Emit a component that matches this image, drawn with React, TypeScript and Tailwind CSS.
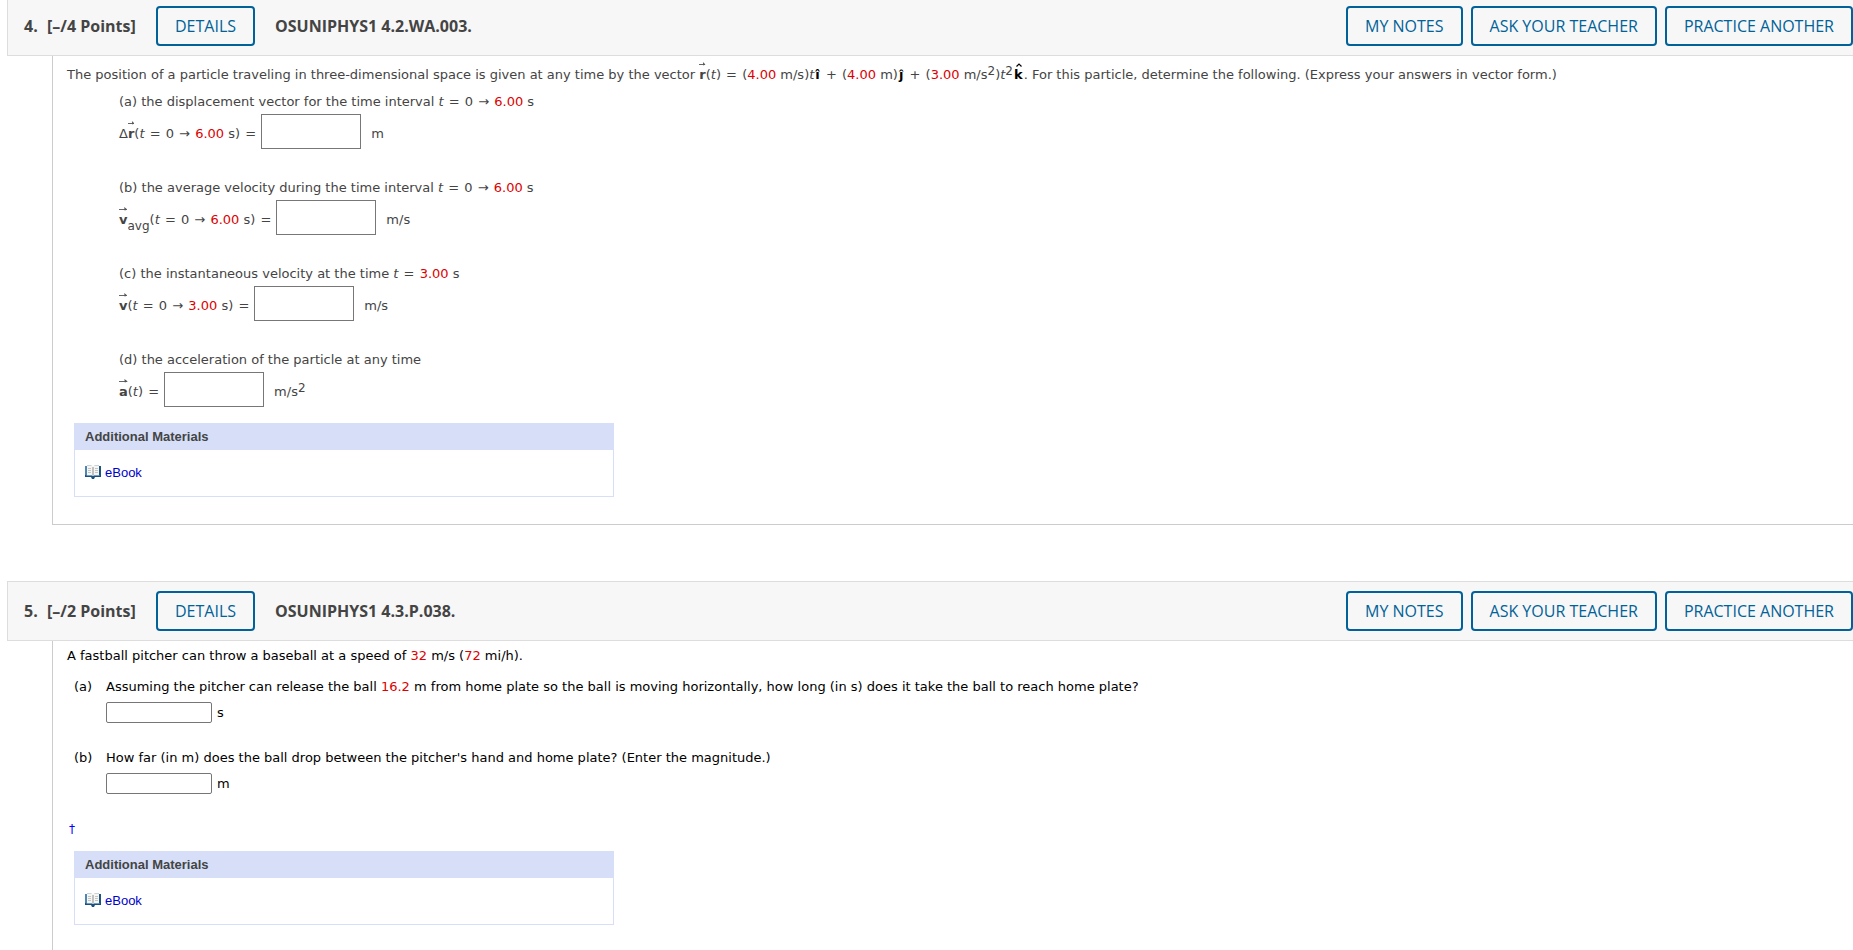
import React from "react";

const questionButtons = ["MY NOTES", "ASK YOUR TEACHER", "PRACTICE ANOTHER"];

const buttonClass =
  "h-10 shrink-0 whitespace-nowrap rounded border-2 border-[#006298] px-[17px] font-['Open_Sans',sans-serif] text-base font-medium leading-none text-[#006298]";

function Num({ children }: { children: React.ReactNode }) {
  return <span className="text-[#dd0000]">{children}</span>;
}

function Op({ children }: { children: React.ReactNode }) {
  return <span className="mx-px">{children}</span>;
}

function Vec({ children }: { children: React.ReactNode }) {
  return (
    <b className="relative inline-block">
      {children}
      <svg
        className="absolute -top-1 left-0 h-1.5 w-full"
        viewBox="0 0 9 6"
        preserveAspectRatio="none"
        aria-hidden="true"
      >
        <path d="M0 3H8V4H0Z" fill="#666" />
        <path d="M5.5 1L9 3.5L6 4.5Z" fill="#555" />
      </svg>
    </b>
  );
}

function Hat({ children }: { children: React.ReactNode }) {
  return (
    <b className="relative mx-px inline-block text-black">
      {children}
      <svg
        className="absolute -top-0.5 left-0.5 h-1 w-1.5"
        viewBox="0 0 6 4"
        fill="none"
        stroke="currentColor"
        strokeWidth="1.2"
        aria-hidden="true"
      >
        <path d="M0.5 3.5L3 1L5.5 3.5" />
      </svg>
    </b>
  );
}

function Sup({ children }: { children: React.ReactNode }) {
  return <sup className="-top-1 text-[12px]">{children}</sup>;
}

function BookIcon() {
  return (
    <svg className="mb-1" width="16" height="15" viewBox="0 0 16 15" aria-hidden="true">
      <path d="M0 2H8V13H6L0 12.5Z" fill="#4d86b3" />
      <path d="M8 2H16V12.5L10 13H8Z" fill="#1f5380" />
      <path d="M0 11H16V13H10L9 15H7L6 13H0Z" fill="#1d4f7c" />
      <path d="M1.5 11.5H14.5" stroke="#6d9dc2" />
      <path d="M2 1H6.5L8 2L9.5 1H14V11H9L8 12L7 11H2Z" fill="#f6f6f4" />
      <path d="M2 1.5H6.5M9.5 1.5H14" stroke="#c9d3da" />
      <path
        d="M3 4.5H6M3 6.5H6M3 8.5H6M10 4.5H13M10 6.5H13M10 8.5H13"
        stroke="#c4c4c4"
      />
      <path d="M8 3V11" stroke="#8d8d8d" />
    </svg>
  );
}

type HeaderProps = {
  number: string;
  points: string;
  title: string;
  className: string;
};

function QuestionHeader({ number, points, title, className }: HeaderProps) {
  return (
    <header
      className={`ml-[7px] flex items-center border-b border-l border-[#ddd] bg-[#f7f7f7] pl-4 font-['Open_Sans',sans-serif] text-base text-[#444] ${className}`}
    >
      <span className="w-[23px] font-bold">{number}</span>
      <span className="w-[109px] whitespace-nowrap font-bold">{points}</span>
      <button type="button" className={buttonClass}>
        DETAILS
      </button>
      <h2 className="ml-5 font-bold">{title}</h2>
      <div className="ml-auto flex gap-2">
        {questionButtons.map((label) => (
          <button key={label} type="button" className={buttonClass}>
            {label}
          </button>
        ))}
      </div>
    </header>
  );
}

function AdditionalMaterials() {
  return (
    <section className="ml-[21px] w-[540px] border border-[#d6dff7] font-['Liberation_Sans',Arial,sans-serif] text-[13px]">
      <h3 className="bg-[#d6dff7] px-2.5 py-[3px] font-bold leading-5 text-[#444]">
        Additional Materials
      </h3>
      <div className="px-2.5 py-[13px]">
        <a href="#ebook" className="flex items-center gap-1 leading-5 text-[#0000cc]">
          <BookIcon />
          eBook
        </a>
      </div>
    </section>
  );
}

type VectorPartProps = {
  id: string;
  question: React.ReactNode;
  answer: React.ReactNode;
  unit: React.ReactNode;
};

function VectorPart({ id, question, answer, unit }: VectorPartProps) {
  return (
    <div>
      <p>{question}</p>
      <div className="mt-0.5 flex items-center">
        <label htmlFor={id} className="pt-1">
          {answer}
        </label>
        <input id={id} type="text" className="ml-1 h-[35px] w-[100px] border border-[#777] px-2" />
        <span className="ml-2.5 pt-1">{unit}</span>
      </div>
    </div>
  );
}

type PlainPartProps = {
  id: string;
  letter: string;
  question: React.ReactNode;
  unit: string;
};

function PlainPart({ id, letter, question, unit }: PlainPartProps) {
  return (
    <div className="flex">
      <span className="w-8">({letter})</span>
      <div>
        <label htmlFor={id}>{question}</label>
        <div className="mt-[5px] flex items-center gap-[5px]">
          <input
            id={id}
            type="text"
            className="h-[21px] w-[106px] rounded-xs border border-[#767676] px-1"
          />
          <span>{unit}</span>
        </div>
      </div>
    </div>
  );
}

export default function App() {
  return (
    <main className="min-h-screen overflow-hidden bg-white font-['DejaVu_Sans',Verdana,sans-serif] text-[13px] leading-5">
      <article>
        <QuestionHeader
          number="4."
          points="[–/4 Points]"
          title="OSUNIPHYS1 4.2.WA.003."
          className="pb-[9px] pt-1.5"
        />
        <div className="ml-[52px] border-b border-l border-[#ccc] pb-[27px] pt-[9px] text-[#444]">
          <p className="pl-3.5">
            The position of a particle traveling in three-dimensional space is given at any time by
            the vector <Vec>r</Vec>(<i>t</i>) <Op>=</Op> (<Num>4.00</Num> m/s)<i>t</i>
            <b className="mx-px text-black">î</b> <Op>+</Op> (<Num>4.00</Num> m)
            <b className="mx-px text-black">ĵ</b> <Op>+</Op> (<Num>3.00</Num> m/s<Sup>2</Sup>)
            <i>t</i>
            <Sup>2</Sup>
            <Hat>k</Hat>. For this particle, determine the following. (Express your answers in
            vector form.)
          </p>
          <div className="flex flex-col gap-[29px] pb-4 pl-[66px] pt-[7px]">
            <VectorPart
              id="displacement"
              question={
                <>
                  (a) the displacement vector for the time interval <i>t</i> <Op>=</Op> 0{" "}
                  <Op>→</Op> <Num>6.00</Num> s
                </>
              }
              answer={
                <>
                  Δ<Vec>r</Vec>(<i>t</i> <Op>=</Op> 0 <Op>→</Op> <Num>6.00</Num> s) <Op>=</Op>
                </>
              }
              unit="m"
            />
            <VectorPart
              id="average-velocity"
              question={
                <>
                  (b) the average velocity during the time interval <i>t</i> <Op>=</Op> 0{" "}
                  <Op>→</Op> <Num>6.00</Num> s
                </>
              }
              answer={
                <>
                  <Vec>v</Vec>
                  <sub className="-bottom-1.5 text-[12px]">avg</sub>(<i>t</i> <Op>=</Op> 0{" "}
                  <Op>→</Op> <Num>6.00</Num> s) <Op>=</Op>
                </>
              }
              unit="m/s"
            />
            <VectorPart
              id="instantaneous-velocity"
              question={
                <>
                  (c) the instantaneous velocity at the time <i>t</i> <Op>=</Op> <Num>3.00</Num> s
                </>
              }
              answer={
                <>
                  <Vec>v</Vec>(<i>t</i> <Op>=</Op> 0 <Op>→</Op> <Num>3.00</Num> s) <Op>=</Op>
                </>
              }
              unit="m/s"
            />
            <VectorPart
              id="acceleration"
              question="(d) the acceleration of the particle at any time"
              answer={
                <>
                  <Vec>a</Vec>(<i>t</i>) <Op>=</Op>
                </>
              }
              unit={
                <>
                  m/s<Sup>2</Sup>
                </>
              }
            />
          </div>
          <AdditionalMaterials />
        </div>
      </article>

      <article className="mt-14">
        <QuestionHeader
          number="5."
          points="[–/2 Points]"
          title="OSUNIPHYS1 4.3.P.038."
          className="border-t py-[9px]"
        />
        <div className="ml-[52px] border-l border-[#ccc] pb-14 pt-[5px] text-black">
          <p className="pl-3.5">
            A fastball pitcher can throw a baseball at a speed of <Num>32</Num> m/s (<Num>72</Num>{" "}
            mi/h).
          </p>
          <div className="flex flex-col gap-[25px] pb-[25px] pl-[21px] pt-[11px]">
            <PlainPart
              id="time-to-plate"
              letter="a"
              question={
                <>
                  Assuming the pitcher can release the ball <Num>16.2</Num> m from home plate so the
                  ball is moving horizontally, how long (in s) does it take the ball to reach home
                  plate?
                </>
              }
              unit="s"
            />
            <PlainPart
              id="ball-drop"
              letter="b"
              question="How far (in m) does the ball drop between the pitcher's hand and home plate? (Enter the magnitude.)"
              unit="m"
            />
          </div>
          <p className="mb-3 pl-4">
            <a href="#note" className="text-[12px] text-[#0000ff]">
              †
            </a>
          </p>
          <AdditionalMaterials />
        </div>
      </article>
    </main>
  );
}
